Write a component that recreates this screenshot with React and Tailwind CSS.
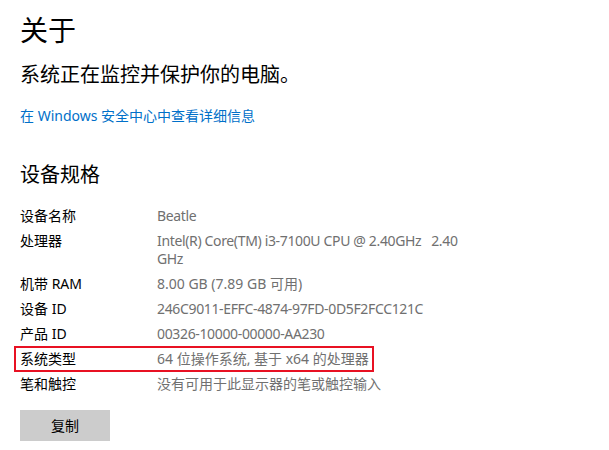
const specs = [
  { label: "设备名称", value: "Beatle", tight: true },
  {
    label: "处理器",
    tight: true,
    value: (
      <>
        {"Intel(R) Core(TM) i3-7100U CPU @ 2.40GHz   2.40"}
        <br />
        GHz
      </>
    ),
  },
  { label: "机带 RAM", value: "8.00 GB (7.89 GB 可用)" },
  { label: "设备 ID", value: "246C9011-EFFC-4874-97FD-0D5F2FCC121C", tight: true },
  { label: "产品 ID", value: "00326-10000-00000-AA230", tight: true },
  { label: "系统类型", value: "64 位操作系统, 基于 x64 的处理器", marked: true },
  { label: "笔和触控", value: "没有可用于此显示器的笔或触控输入" },
];

export default function App() {
  return (
    <div
      className="w-[609px] h-[450px] overflow-hidden bg-white pl-5 pt-3 text-black"
      style={{ fontFamily: '"Noto Sans", "Noto Sans CJK SC", sans-serif' }}
    >
      <h1 className="text-[28px] leading-[36px] font-normal">关于</h1>
      <p className="mt-[13px] text-[20px] leading-[28px]">系统正在监控并保护你的电脑。</p>
      <a className="mt-[17px] block text-[14px] leading-[20px] text-[#0070c9]">
        在 Windows 安全中心中查看详细信息
      </a>

      <h2 className="mt-[35px] text-[20px] leading-[28px] font-normal">设备规格</h2>

      <div className="mt-[18px] flex flex-col gap-[7px] text-[14px] leading-[18px]">
        {specs.map((s) => (
          <div key={s.label} className="relative flex">
            <div className="w-[137px] shrink-0">{s.label}</div>
            <div
              className={
                s.tight
                  ? "whitespace-pre tracking-[-0.35px] text-[#707070]"
                  : "whitespace-pre text-[#707070]"
              }
            >
              {s.value}
            </div>
            {s.marked && (
              <span className="absolute left-[-6px] top-[-4px] h-[26px] w-[360px] border-2 border-[#e81123]" />
            )}
          </div>
        ))}
      </div>

      <button className="mt-[17px] h-[31px] w-[90px] bg-[#cccccc] text-[14px] text-black">
        复制
      </button>
    </div>
  );
}
